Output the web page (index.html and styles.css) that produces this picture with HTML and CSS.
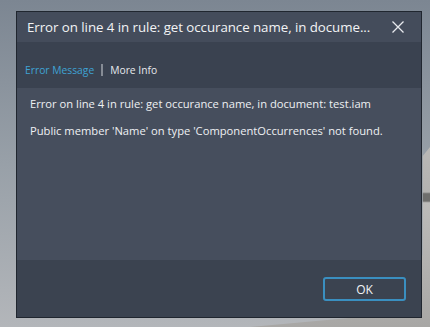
FILE: index.html
```html
<!DOCTYPE html>
<html>
<head>
<meta charset="utf-8">
<link rel="stylesheet" href="styles.css">
</head>
<body>
<div class="backdrop">
  <div class="scene"></div>
  <div class="dialog">
    <div class="titlebar">
      <span class="title">Error on line 4 in rule: get occurance name, in docume...</span>
      <svg class="close" width="12" height="12" viewBox="0 0 12 12"><path d="M0.5 0.5 L11.5 11.5 M11.5 0.5 L0.5 11.5" stroke="#e8eaee" stroke-width="1.3" fill="none"/></svg>
    </div>
    <div class="tabs">
      <span class="tab active">Error Message</span>
      <span class="sep"></span>
      <span class="tab">More Info</span>
    </div>
    <div class="content">
      <p>Error on line 4 in rule: get occurance name, in document: test.iam</p>
      <p>Public member 'Name' on type 'ComponentOccurrences' not found.</p>
    </div>
    <div class="footer">
      <button class="ok">OK</button>
    </div>
  </div>
</div>
</body>
</html>
```
FILE: styles.css
```css
html, body {
  margin: 0;
  padding: 0;
}
body {
  width: 430px;
  height: 327px;
  overflow: hidden;
  font-family: "Open Sans", "Noto Sans", sans-serif;
}
.backdrop {
  position: relative;
  width: 430px;
  height: 327px;
  background: linear-gradient(#7c8692 0%, #98a0a8 50%, #b3b6ba 100%);
  padding: 11px 0 0 16px;
  box-sizing: border-box;
}
.scene {
  position: absolute;
  right: 0;
  bottom: 0;
  width: 180px;
  height: 180px;
  background: linear-gradient(#b9b8b6 0%, #b3b2b0 25%, #6e6e6c 26%, #6e6e6c 30%, #bcbbb9 31%, #a8a7a5 100%);
  clip-path: polygon(100% 0, 100% 100%, 0 100%, 55% 95%, 96% 60%, 96% 5%);
}
.dialog {
  position: relative;
  width: 406px;
  height: 307px;
  border: 1px solid #20262f;
  box-sizing: border-box;
  display: flex;
  flex-direction: column;
  background: #3b4350;
}
.titlebar {
  height: 30px;
  background: #444c5b;
  display: flex;
  align-items: center;
  justify-content: space-between;
  padding: 0 17px 0 10px;
}
.title {
  color: #f2f3f5;
  font-size: 13.3px;
  letter-spacing: -0.05px;
  white-space: nowrap;
}
.close {
  display: block;
}
.tabs {
  height: 46px;
  box-sizing: border-box;
  background: #3a4250;
  display: flex;
  align-items: center;
  padding: 9px 8px 0;
  font-size: 10.3px;
  color: #e6e8ec;
}
.tab.active {
  color: #3fa2d4;
}
.sep {
  width: 2px;
  height: 12px;
  background: #868c95;
  margin: 0 7px 0 7px;
}
.content {
  height: 172px;
  background: #464e5d;
  padding: 7px 13px;
  box-sizing: border-box;
  color: #eef0f3;
  font-size: 11.2px;
}
.content p {
  margin: 0 0 10px;
  line-height: 17px;
}
.footer {
  flex: 1;
  background: #3b4350;
  display: flex;
  justify-content: flex-end;
  align-items: flex-start;
  padding: 17px 15px 0 0;
}
.ok {
  width: 83px;
  height: 24px;
  border: 2px solid #3a8fc0;
  border-radius: 3px;
  background: #3b4350;
  color: #f2f3f5;
  font-family: "Open Sans", "Noto Sans", sans-serif;
  font-size: 12px;
  padding: 0;
}
```
